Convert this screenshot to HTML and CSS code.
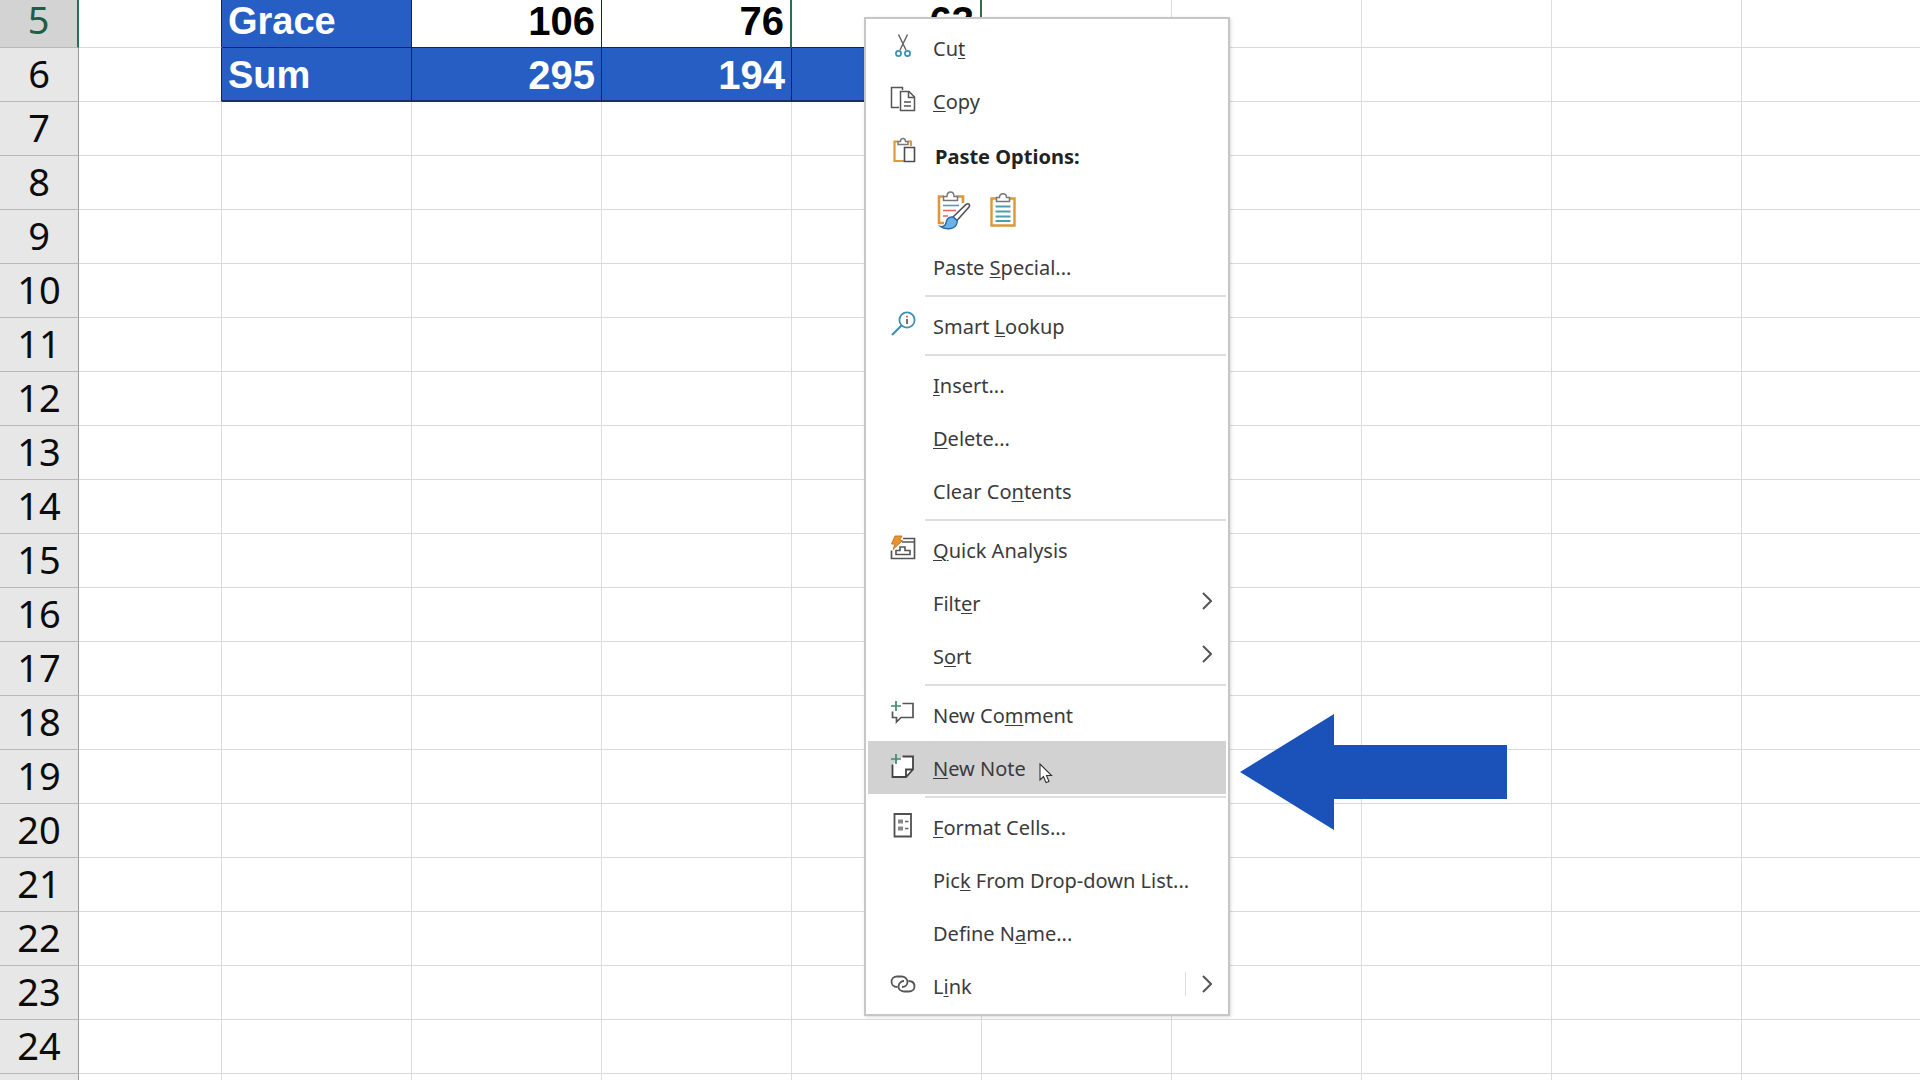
FILE: index.html
```html
<!DOCTYPE html>
<html lang="en">
<head>
<meta charset="utf-8">
<title>Worksheet</title>
<link rel="stylesheet" href="styles.css">
</head>
<body>
<main class="workspace">
  <table class="sheet">
    <colgroup><col class="col-head"><col class="col-a"><col class="col"><col class="col"><col class="col"><col class="col"><col class="col"><col class="col"><col class="col"><col class="col"><col></colgroup>
    <tbody>
      <tr><th scope="row" class="active">5</th><td class="before"></td><td class="name">Grace</td><td class="num">106</td><td class="num next-selected">76</td><td class="num selected">63</td><td></td><td></td><td></td><td></td><td></td></tr>
      <tr class="total"><th scope="row">6</th><td class="before"></td><td class="name">Sum</td><td class="num">295</td><td class="num">194</td><td class="num"></td><td></td><td></td><td></td><td></td><td></td></tr>
      <tr><th scope="row">7</th><td></td><td></td><td></td><td></td><td></td><td></td><td></td><td></td><td></td><td></td></tr>
      <tr><th scope="row">8</th><td></td><td></td><td></td><td></td><td></td><td></td><td></td><td></td><td></td><td></td></tr>
      <tr><th scope="row">9</th><td></td><td></td><td></td><td></td><td></td><td></td><td></td><td></td><td></td><td></td></tr>
      <tr><th scope="row">10</th><td></td><td></td><td></td><td></td><td></td><td></td><td></td><td></td><td></td><td></td></tr>
      <tr><th scope="row">11</th><td></td><td></td><td></td><td></td><td></td><td></td><td></td><td></td><td></td><td></td></tr>
      <tr><th scope="row">12</th><td></td><td></td><td></td><td></td><td></td><td></td><td></td><td></td><td></td><td></td></tr>
      <tr><th scope="row">13</th><td></td><td></td><td></td><td></td><td></td><td></td><td></td><td></td><td></td><td></td></tr>
      <tr><th scope="row">14</th><td></td><td></td><td></td><td></td><td></td><td></td><td></td><td></td><td></td><td></td></tr>
      <tr><th scope="row">15</th><td></td><td></td><td></td><td></td><td></td><td></td><td></td><td></td><td></td><td></td></tr>
      <tr><th scope="row">16</th><td></td><td></td><td></td><td></td><td></td><td></td><td></td><td></td><td></td><td></td></tr>
      <tr><th scope="row">17</th><td></td><td></td><td></td><td></td><td></td><td></td><td></td><td></td><td></td><td></td></tr>
      <tr><th scope="row">18</th><td></td><td></td><td></td><td></td><td></td><td></td><td></td><td></td><td></td><td></td></tr>
      <tr><th scope="row">19</th><td></td><td></td><td></td><td></td><td></td><td></td><td></td><td></td><td></td><td></td></tr>
      <tr><th scope="row">20</th><td></td><td></td><td></td><td></td><td></td><td></td><td></td><td></td><td></td><td></td></tr>
      <tr><th scope="row">21</th><td></td><td></td><td></td><td></td><td></td><td></td><td></td><td></td><td></td><td></td></tr>
      <tr><th scope="row">22</th><td></td><td></td><td></td><td></td><td></td><td></td><td></td><td></td><td></td><td></td></tr>
      <tr><th scope="row">23</th><td></td><td></td><td></td><td></td><td></td><td></td><td></td><td></td><td></td><td></td></tr>
      <tr><th scope="row">24</th><td></td><td></td><td></td><td></td><td></td><td></td><td></td><td></td><td></td><td></td></tr>
      <tr><th></th><td></td><td></td><td></td><td></td><td></td><td></td><td></td><td></td><td></td><td></td></tr>
    </tbody>
  </table>

  <div class="menu" role="menu">
    <button class="item" role="menuitem">
      <svg class="icon" viewBox="0 0 26 26" fill="none"><path d="M8.500 1.500L16 17M17.500 1.500L10 17" stroke="#666" stroke-width="1.500"/><circle cx="8.500" cy="20.500" r="2.600" stroke="#3a8fb7" stroke-width="1.700"/><circle cx="17.500" cy="20.500" r="2.600" stroke="#3a8fb7" stroke-width="1.700"/></svg>
      <span>Cu<u>t</u></span>
    </button>
    <button class="item" role="menuitem">
      <svg class="icon" viewBox="0 0 26 26" fill="none" stroke="#555" stroke-width="1.500"><path d="M9 21.500H1.500V1.500H12.500V4"/><path d="M10.500 5.500H19L24.500 11V24.500H10.500ZM18.500 5.500V11.500H24.500M14 16H21M14 20H21"/></svg>
      <span><u>C</u>opy</span>
    </button>
    <div class="paste-head">
      <svg class="icon" viewBox="0 0 26 26" fill="none"><path d="M8 4.500H4.500V24H14M18 4.500H21V9" stroke="#e09a3c" stroke-width="2.200"/><path d="M8 7.500V4.500H10.500C10.500 .500 15.500 .500 15.500 4.500H18V7.500Z" stroke="#777" stroke-width="1.400" fill="#fff"/><path d="M14.500 10.500H24.500V24.500H14.500Z" stroke="#4c4c55" stroke-width="1.600" fill="#fff"/></svg>
      <strong>Paste Options:</strong>
    </div>
    <div class="paste-options">
      <button class="paste-button" role="menuitem" aria-label="Keep Source Formatting">
        <svg width="36" height="40" viewBox="0 0 36 40" fill="none"><path d="M8 6.500H3V33H8M20 6.500H27V13" stroke="#dd9638" stroke-width="2.600"/><path d="M7.500 10.500V6.500H11C11 .500 18 .500 18 6.500H21.500V10.500Z" stroke="#777" stroke-width="1.500" fill="#fff"/><path d="M7 15.500H23" stroke="#4b9ccc" stroke-width="1.600"/><path d="M7 20.500H20M7 26H12" stroke="#e0635c" stroke-width="1.700"/><path d="M17 27L30 14.500C32.500 13 34.500 14 33 17L21 30.500Z" stroke="#50505a" stroke-width="1.600" fill="#fff"/><path d="M17 27C13 26.500 10.500 29 10 33C9.500 35.500 7 37 4.500 36.500C8 39.500 18 40 20.500 34.500C21.200 33 21.500 31.500 21 30.500Z" stroke="#2769a3" stroke-width="1.400" fill="#6cb2e8"/></svg>
      </button>
      <button class="paste-button" role="menuitem" aria-label="Keep Text Only">
        <svg width="28" height="36" viewBox="0 0 28 36" fill="none"><path d="M2.500 6.500H25.500V33.500H2.500Z" stroke="#dd9638" stroke-width="2.400"/><path d="M7.500 9.500V5.500H10.500C10.500 .500 17.500 .500 17.500 5.500H20.500V9.500Z" stroke="#777" stroke-width="1.500" fill="#fff"/><path d="M6.500 14.500H21.500M6.500 19.500H21.500M6.500 24.500H21.500M6.500 29H21.500" stroke="#4d9db0" stroke-width="1.800"/></svg>
      </button>
    </div>
    <button class="item" role="menuitem"><span class="icon"></span><span>Paste <u>S</u>pecial...</span></button>
    <hr class="rule">
    <button class="item" role="menuitem">
      <svg class="icon" viewBox="0 0 26 26" fill="none"><circle cx="17" cy="9" r="7.600" stroke="#3e8fb5" stroke-width="1.800"/><path d="M11.500 14.500L2 24" stroke="#3e8fb5" stroke-width="2.200"/><path d="M17 8V13" stroke="#6d5a5a" stroke-width="1.800"/><path d="M17 4.700V6.500" stroke="#c0604c" stroke-width="1.800"/></svg>
      <span>Smart <u>L</u>ookup</span>
    </button>
    <hr class="rule">
    <button class="item" role="menuitem"><span class="icon"></span><span><u>I</u>nsert...</span></button>
    <button class="item" role="menuitem"><span class="icon"></span><span><u>D</u>elete...</span></button>
    <button class="item" role="menuitem"><span class="icon"></span><span>Clear Co<u>n</u>tents</span></button>
    <hr class="rule">
    <button class="item" role="menuitem">
      <svg class="icon" viewBox="0 0 26 26" fill="none"><path d="M13 3.500H24.500V23.500H1.500V15.500M12 7H24" stroke="#555" stroke-width="1.700"/><path d="M6 19.500V15.500H10V12H15V15.500H20V19.500Z" stroke="#555" stroke-width="1.600"/><path d="M5 1H12L9.500 5.500H12.500L3 14.500L5 9H1.500Z" fill="#e9932f" stroke="#c87a22"/></svg>
      <span><u>Q</u>uick Analysis</span>
    </button>
    <button class="item" role="menuitem"><span class="icon"></span><span>Filt<u>e</u>r</span><svg class="chevron" viewBox="0 0 10 18"><path d="M1 1L9 9L1 17"/></svg></button>
    <button class="item" role="menuitem"><span class="icon"></span><span>S<u>o</u>rt</span><svg class="chevron" viewBox="0 0 10 18"><path d="M1 1L9 9L1 17"/></svg></button>
    <hr class="rule">
    <button class="item" role="menuitem">
      <svg class="icon" viewBox="0 0 26 26" fill="none"><path d="M12.500 3.500H23V17.500H11L6.500 22V17.500H2.500V11.500" stroke="#555" stroke-width="1.700"/><path d="M6 1V11M1 6H11" stroke="#3d8e6b" stroke-width="1.700"/></svg>
      <span>New Co<u>m</u>ment</span>
    </button>
    <button class="item current" role="menuitem">
      <svg class="icon" viewBox="0 0 26 26" fill="none"><path d="M12.500 3.500H23V16.500L16 24H2.500V11.500L7 8Z" fill="#fff"/><path d="M12.500 3.500H23V16.500L16 24H2.500V11.500M23 16.500H16V24" stroke="#444" stroke-width="1.800"/><path d="M6 1V11M1 6H11" stroke="#3d8e6b" stroke-width="1.700"/></svg>
      <span><u>N</u>ew Note</span>
    </button>
    <hr class="rule">
    <button class="item" role="menuitem">
      <svg class="icon" viewBox="0 0 26 26" fill="none"><path d="M4.500 2H21V24.500H4.500Z" stroke="#505050" stroke-width="1.800"/><path d="M8 9.500H13M8 16.500H13" stroke="#888" stroke-width="4"/><path d="M15 9.500H18.500M15 16.500H18.500" stroke="#666" stroke-width="1.500"/></svg>
      <span><u>F</u>ormat Cells...</span>
    </button>
    <button class="item" role="menuitem"><span class="icon"></span><span>Pic<u>k</u> From Drop-down List...</span></button>
    <button class="item" role="menuitem"><span class="icon"></span><span>Define N<u>a</u>me...</span></button>
    <button class="item" role="menuitem">
      <svg class="icon" viewBox="0 0 26 26" fill="none" stroke="#555" stroke-width="1.800"><path d="M7.500 16C3.500 16 1.500 13.500 1.500 10.500C1.500 7.500 4 5.500 7 5.500H11.500C15 5.500 17.500 8 17.500 11C17.500 14 15 16 12 16"/><path d="M18.500 10C22.500 10 24.500 12.500 24.500 15.500C24.500 18.500 22 20.500 19 20.500H14C10.500 20.500 8.500 18 8.500 15.500C8.500 12.500 11 10 14 10"/></svg>
      <span>L<u>i</u>nk</span><svg class="chevron split" viewBox="0 0 10 18"><path d="M1 1L9 9L1 17"/></svg>
    </button>
  </div>

  <svg class="pointer-arrow" viewBox="0 0 267 116"><path d="M0 58L94 0V31H267V85H94V116Z" fill="#1a52ba"/></svg>
  <svg class="cursor" viewBox="0 0 14 22"><path d="M1 1V17L4.500 13.500L7 19.500L10 18.500L7.500 12.500H12.500Z" fill="#fff" stroke="#333" stroke-width="1.100"/></svg>
</main>
</body>
</html>
```
FILE: styles.css
```css
* {
  box-sizing: border-box;
}

body {
  margin: 0;
  background: #fff;
  font-family: "Noto Sans", "Open Sans", sans-serif;
}

.workspace {
  position: relative;
  height: 100vh;
  overflow: hidden;
}

/* Worksheet: the first visible row is scrolled slightly out of view */
.sheet {
  width: 100%;
  margin-top: -6px;
  table-layout: fixed;
  border-collapse: separate;
  border-spacing: 0;
}

.col-head {
  width: 79px;
}

.col-a {
  width: 143px;
}

.col {
  width: 190px;
}

.sheet th,
.sheet td {
  height: 54px;
  padding: 0;
  border-right: 1px solid #dcdcdc;
  border-bottom: 1px solid #dadada;
  line-height: 48px;
}

.sheet td:last-child {
  border-right: 0;
}

.sheet th {
  padding-bottom: 4px;
  background: #e7e7e7;
  border-right-color: #999;
  border-bottom-color: #b8b8b8;
  color: #0c0c0c;
  font-size: 38px;
  font-weight: 400;
  text-align: center;
}

.sheet th.active {
  background: #d3d3d3;
  border-right: 2px solid #2c6e50;
  color: #215c43;
}

.sheet .name,
.sheet .num {
  border-right-color: #14264e;
  border-bottom-color: #14264e;
  font-family: "Liberation Sans", Arial, sans-serif;
  font-weight: 700;
}

.sheet .before {
  border-right-color: #14264e;
}

.sheet .name {
  padding-left: 6px;
  background: #265ec4;
  color: #fff;
  font-size: 38px;
}

.sheet .num {
  padding-right: 6px;
  font-size: 40px;
  text-align: right;
}

.sheet .next-selected,
.sheet .selected {
  border-right: 2px solid #2c6e50;
}

.total .num {
  background: #265ec4;
  color: #fff;
}

.sheet .total .name,
.sheet .total .num {
  padding-top: 2px;
  border-bottom: 2px solid #14316e;
}

/* Context menu */
.menu {
  position: absolute;
  top: 17px;
  left: 864px;
  width: 366px;
  padding: 2px;
  border: 2px solid #c6c6c6;
  background: #fff;
  box-shadow: 1px 1px 3px rgba(0, 0, 0, 0.15);
  color: #3b3b3b;
  font-size: 20px;
}

.item,
.paste-head {
  display: flex;
  align-items: center;
  gap: 17px;
  width: 100%;
  height: 53px;
  padding: 2px 14px 0 22px;
}

.item {
  border: 0;
  background: none;
  color: inherit;
  font: inherit;
  text-align: left;
}

.item.current {
  background: #d2d2d2;
}

.item u {
  text-decoration-thickness: 1px;
  text-underline-offset: 2px;
}

.icon {
  flex: none;
  width: 26px;
  height: 26px;
  margin-bottom: 5px;
}

.paste-head {
  height: 57px;
  gap: 19px;
  color: #222;
}

.paste-head .icon {
  margin-bottom: 14px;
}

.paste-options {
  display: flex;
  align-items: center;
  gap: 17px;
  height: 56px;
  padding: 0 0 4px 68px;
}

.paste-button {
  display: flex;
  padding: 0;
  border: 0;
  background: none;
}

.chevron {
  width: 10px;
  height: 18px;
  margin: 0 0 5px auto;
  fill: none;
  stroke: #555;
  stroke-width: 2;
}

.chevron.split {
  box-sizing: content-box;
  padding: 3px 0 3px 16px;
  border-left: 1px solid #dcdcdc;
}

.rule {
  height: 2px;
  margin: 2px 0 2px 57px;
  border: 0;
  background: #dedede;
}

/* Callout and mouse pointer drawn over the sheet */
.pointer-arrow {
  position: absolute;
  top: 714px;
  left: 1240px;
  width: 267px;
  height: 116px;
}

.cursor {
  position: absolute;
  top: 763px;
  left: 1039px;
  width: 14px;
  height: 22px;
}
```
